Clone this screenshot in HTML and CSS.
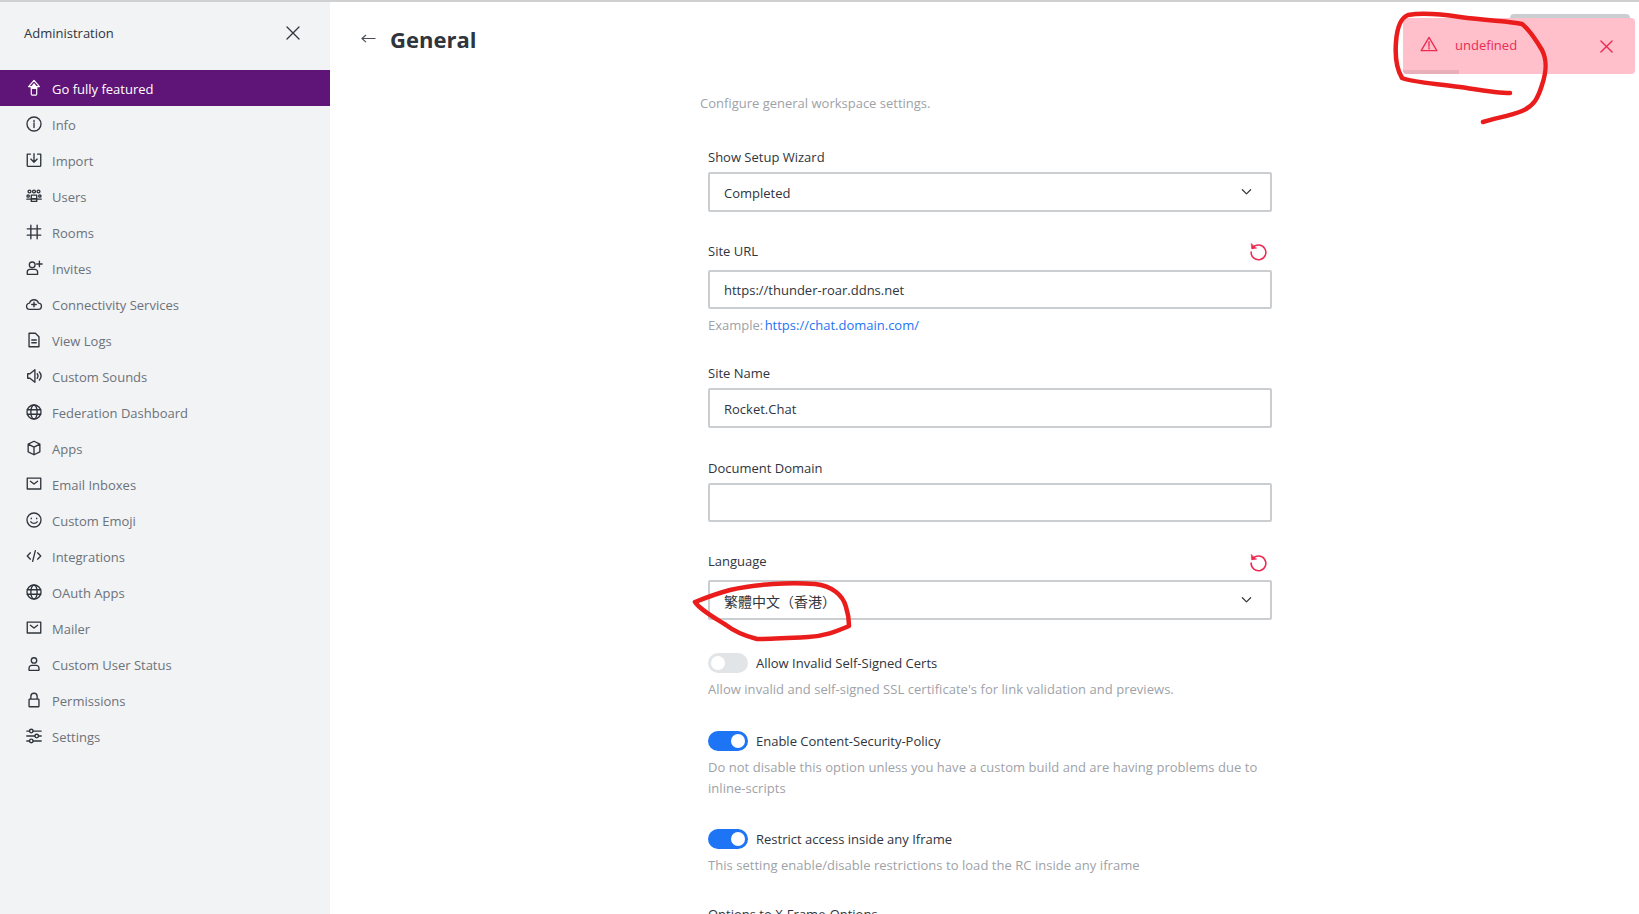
FILE: index.html

```html
<!DOCTYPE html>
<html lang="en">
<head>
  <meta charset="UTF-8">
  <title>General - Administration</title>
  <link rel="stylesheet" href="styles.css">
</head>
<body>
  <aside class="sidebar">
    <div class="sidebar-head">
      <span>Administration</span>
      <svg class="close" viewBox="0 0 14 14"><path d="M1 1l12 12M13 1L1 13"/></svg>
    </div>
    <nav class="nav">
      <a class="nav-item upgrade"><svg viewBox="0 0 20 20"><path d="M10 1.500L16 8.500h-3v8.500a1 1 0 0 1-1 1H8a1 1 0 0 1-1-1V8.500H4z"/><path class="solid" d="M10 4.500L13.500 9v2h-7V9z"/></svg>Go fully featured</a>
      <a class="nav-item"><svg viewBox="0 0 20 20"><circle cx="10" cy="10" r="7.800"/><path d="M10 9v5M10 6v1.500"/></svg>Info</a>
      <a class="nav-item"><svg viewBox="0 0 20 20"><path d="M6 3.500H2.500V16a1 1 0 0 0 1 1h13a1 1 0 0 0 1-1V3.500H14"/><path d="M10 3v9M6.500 9l3.500 3.500L13.500 9"/></svg>Import</a>
      <a class="nav-item"><svg viewBox="0 0 20 20"><circle cx="5" cy="5" r="1.600"/><circle cx="10" cy="5" r="1.600"/><circle cx="15" cy="5" r="1.600"/><circle cx="3.500" cy="10" r="1.300"/><circle cx="16.500" cy="10" r="1.300"/><path d="M7 9h6v4H7zM7 13.500h6V16H7zM2 13.500h4M14 13.500h4"/></svg>Users</a>
      <a class="nav-item"><svg viewBox="0 0 20 20"><path d="M6.500 2.500v15M13.500 2.500v15M2.500 6.500h15M2.500 13.500h15"/></svg>Rooms</a>
      <a class="nav-item"><svg viewBox="0 0 20 20"><circle cx="8" cy="6.500" r="3.200"/><path d="M5 11.500h6a3 3 0 0 1 3 3V17H2.500v-2.500a3 3 0 0 1 2.500-3zM16 2.500v6M13 5.500h6"/></svg>Invites</a>
      <a class="nav-item"><svg viewBox="0 0 20 20"><path d="M5.500 16a3.500 3.500 0 0 1-.5-7 5.200 5.200 0 0 1 10 0 3.500 3.500 0 0 1-.5 7zM10 8v5M7.500 10.500h5"/></svg>Connectivity Services</a>
      <a class="nav-item"><svg viewBox="0 0 20 20"><path d="M4.500 2.500h7l4 4v11h-11zM7.500 10h5M7.500 13h5"/></svg>View Logs</a>
      <a class="nav-item"><svg viewBox="0 0 20 20"><path d="M3 7.500h2.500L11 3v14l-5.500-4.500H3zM13.500 7.500a4 4 0 0 1 0 5M16 5.500a7 7 0 0 1 0 9"/></svg>Custom Sounds</a>
      <a class="nav-item"><svg viewBox="0 0 20 20"><circle cx="10" cy="10" r="7.800"/><ellipse cx="10" cy="10" rx="3.500" ry="7.800"/><path d="M2.500 7.500h15M2.500 12.500h15"/></svg>Federation Dashboard</a>
      <a class="nav-item"><svg viewBox="0 0 20 20"><path d="M10 2.500l6.500 3.200v8.600L10 17.500l-6.500-3.200V5.700zM3.500 5.700L10 9l6.500-3.300M10 9v8.500"/></svg>Apps</a>
      <a class="nav-item"><svg viewBox="0 0 20 20"><path d="M2.500 3.500h15v12h-15zM6 7l4 3 4-3"/></svg>Email Inboxes</a>
      <a class="nav-item"><svg viewBox="0 0 20 20"><circle cx="10" cy="10" r="7.800"/><path d="M7 8v.5M13 8v.5M6.500 12c1.800 2.300 5.200 2.300 7 0"/></svg>Custom Emoji</a>
      <a class="nav-item"><svg viewBox="0 0 20 20"><path d="M6 6.500L2.500 10 6 13.500M14 6.500l3.500 3.500-3.500 3.500M11.500 4l-3 12"/></svg>Integrations</a>
      <a class="nav-item"><svg viewBox="0 0 20 20"><circle cx="10" cy="10" r="7.800"/><ellipse cx="10" cy="10" rx="3.500" ry="7.800"/><path d="M2.500 7.500h15M2.500 12.500h15"/></svg>OAuth Apps</a>
      <a class="nav-item"><svg viewBox="0 0 20 20"><path d="M2.500 3.500h15v12h-15zM6 7l4 3 4-3"/></svg>Mailer</a>
      <a class="nav-item"><svg viewBox="0 0 20 20"><circle cx="10" cy="6" r="3"/><path d="M7.500 11.500h5a3 3 0 0 1 3 3v2.500h-11v-2.500a3 3 0 0 1 3-3z"/></svg>Custom User Status</a>
      <a class="nav-item"><svg viewBox="0 0 20 20"><path d="M6.500 9V6a3.500 3.500 0 0 1 7 0v3M5 9h10a.8.8 0 0 1 .5.8V17a.8.8 0 0 1-.5.5H5a.8.8 0 0 1-.5-.5V9.800A.8.8 0 0 1 5 9z"/></svg>Permissions</a>
      <a class="nav-item"><svg viewBox="0 0 20 20"><circle cx="7" cy="4.500" r="2"/><circle cx="13" cy="10" r="2"/><circle cx="7" cy="15.500" r="2"/><path d="M2 4.500h3M9 4.500h9M2 10h9M15 10h3M2 15.500h3M9 15.500h9"/></svg>Settings</a>
    </nav>
  </aside>

  <main class="main">
    <header class="page-head">
      <svg class="back" viewBox="0 0 16 10"><path d="M5 1L1 4.500h14M1 4.500L5 8"/></svg>
      <h1>General</h1>
    </header>
    <div class="content">
      <p class="intro">Configure general workspace settings.</p>
      <form class="form">
        <div class="field">
          <div class="label-row"><label>Show Setup Wizard</label></div>
          <div class="select"><span>Completed</span><svg viewBox="0 0 12 8"><path d="M1.500 1.500L6 6l4.500-4.500"/></svg></div>
        </div>
        <div class="field">
          <div class="label-row reset-row"><label>Site URL</label><svg class="reset" viewBox="0 0 20 20"><path class="solid" d="M3 2.500l.5 5 4.500-.7z"/><path d="M4.500 6.500A7 7 0 1 1 3 10.500"/></svg></div>
          <input class="input" type="text" value="https://thunder-roar.ddns.net">
          <div class="hint">Example: <a class="link">https://chat.domain.com/</a></div>
        </div>
        <div class="field">
          <div class="label-row"><label>Site Name</label></div>
          <input class="input" type="text" value="Rocket.Chat">
        </div>
        <div class="field">
          <div class="label-row"><label>Document Domain</label></div>
          <input class="input" type="text" value="">
        </div>
        <div class="field field-last">
          <div class="label-row reset-row"><label>Language</label><svg class="reset" viewBox="0 0 20 20"><path class="solid" d="M3 2.500l.5 5 4.500-.7z"/><path d="M4.500 6.500A7 7 0 1 1 3 10.500"/></svg></div>
          <div class="select"><span class="cjk">繁體中文（香港）</span><svg viewBox="0 0 12 8"><path d="M1.500 1.500L6 6l4.500-4.500"/></svg></div>
        </div>
        <div class="field field-wide">
          <div class="switch-row"><span class="toggle"></span><label>Allow Invalid Self-Signed Certs</label></div>
          <p class="desc">Allow invalid and self-signed SSL certificate's for link validation and previews.</p>
        </div>
        <div class="field">
          <div class="switch-row"><span class="toggle on"></span><label>Enable Content-Security-Policy</label></div>
          <p class="desc">Do not disable this option unless you have a custom build and are having problems due to inline-scripts</p>
        </div>
        <div class="field field-tight">
          <div class="switch-row"><span class="toggle on"></span><label>Restrict access inside any Iframe</label></div>
          <p class="desc">This setting enable/disable restrictions to load the RC inside any iframe</p>
        </div>
        <div class="field">
          <div class="label-row"><label>Options to X-Frame-Options</label></div>
        </div>
      </form>
    </div>
  </main>

  <div class="toast-back"></div>
  <div class="toast">
    <svg class="toast-icon" viewBox="0 0 20 18"><path d="M10 1.500L18.800 16.500H1.200zM10 6.500v5M10 13v1.500"/></svg>
    <span class="toast-text">undefined</span>
    <svg class="toast-close" viewBox="0 0 14 14"><path d="M1 1l12 12M13 1L1 13"/></svg>
    <div class="toast-progress"></div>
  </div>

  <svg class="scribble" viewBox="0 0 1639 914">
    <path d="M1483 122C1495 118 1510 116 1522 111C1534 106 1538 98 1542 85C1547 70 1547 60 1542 50C1536 40 1530 30 1522 24C1510 21 1490 21 1460 17C1440 14 1420 13 1408 15C1400 18 1397 28 1396 42C1395 55 1396 68 1402 78C1412 82 1430 83 1460 87C1480 90 1497 93 1510 93"/>
    <path d="M695 602C705 598 715 594 730 590C755 584 790 582 815 584C832 586 843 595 846 607C849 616 849 622 849 626C835 632 825 636 808 637C790 638 770 639 757 639C745 636 735 632 726 625C715 618 700 610 695 602Z"/>
  </svg>
</body>
</html>
```

FILE: styles.css

```css
* { box-sizing: border-box; }
html, body { height: 100%; }
body { margin: 0; display: flex; height: 914px; overflow: hidden; border-top: 2px solid #d0d0d0; background: #fff; color: #2f343d; font-family: "Open Sans", "Noto Sans CJK TC", sans-serif; font-size: 13px; }
svg { fill: none; stroke-linecap: round; stroke-linejoin: round; }

.sidebar { width: 330px; flex: none; background: #f2f3f5; }
.sidebar-head { height: 68px; padding: 0 30px 6px 24px; display: flex; align-items: center; justify-content: space-between; font-size: 13px; }
.close { width: 14px; height: 14px; stroke: #2f343d; stroke-width: 1.300; }

.nav-item { height: 36px; display: flex; align-items: center; gap: 9px; padding: 2px 0 0 25px; color: #6c727a; }
.nav-item svg { width: 18px; height: 18px; flex: none; margin-top: -2px; stroke: #2f343d; stroke-width: 1.500; }
.upgrade { background: #5f1477; color: #fff; }
.upgrade svg { stroke: #fff; stroke-width: 1.300; }
.upgrade .solid { fill: #fff; stroke: none; }

.main { flex: 1; min-width: 0; }
.page-head { height: 72px; padding: 0 0 0 31px; display: flex; align-items: center; gap: 14px; }
.back { width: 15px; height: 10px; margin-top: 2px; stroke: #4a4f57; stroke-width: 1.200; }
.page-head h1 { margin: 0 0 -2px; font-size: 22px; font-weight: 700; }

.content { padding-left: 370px; }
.intro { margin: 20px 0 0; line-height: 18px; color: #9ea2a8; }
.form { width: 564px; margin: 35px 0 0 8px; }
.field { margin-bottom: 30px; }
.field-last { margin-bottom: 33.500px; }
.field-wide { margin-bottom: 31px; }
.field-tight { margin-bottom: 28px; }
.label-row { height: 20px; margin-bottom: 5px; display: flex; align-items: center; justify-content: space-between; }
.reset-row { margin-bottom: 8px; }
.reset-row label { margin-top: -2px; }
.reset { width: 21px; height: 21px; margin-right: 3px; stroke: #ec2a52; stroke-width: 1.500; }
.reset .solid { fill: #ec2a52; stroke-width: .5; }
.input, .select { width: 100%; height: 39.500px; border: 2px solid #cbced1; border-radius: 2px; padding: 2px 14px 0; background: #fff; color: #2f343d; font: inherit; outline: none; }
.select { display: flex; align-items: center; justify-content: space-between; }
.select svg { width: 11px; height: 8px; margin: -2px 4px 0 0; stroke: #2f343d; stroke-width: 1.300; }
.cjk { font-size: 14px; }
.hint { margin-top: 8px; line-height: 16px; color: #9ea2a8; }
.link { margin-left: -2px; color: #1d74f5; }

.switch-row { display: flex; align-items: center; gap: 8px; height: 20px; }
.toggle { width: 40px; height: 20px; border-radius: 10px; background: #e1e5e8; position: relative; flex: none; }
.toggle::after { content: ""; position: absolute; top: 3px; left: 3px; width: 14px; height: 14px; border-radius: 50%; background: #fff; }
.toggle.on { background: #1d74f5; }
.toggle.on::after { left: 23px; }
.desc { margin: 6px 0 0; line-height: 21px; letter-spacing: .04px; color: #9ea2a8; }

.toast-back { position: absolute; top: 14px; left: 1510px; width: 120px; height: 10px; border-radius: 4px 4px 0 0; background: #cbced1; }
.toast { position: absolute; top: 18px; left: 1403px; width: 232px; height: 56px; border-radius: 0 4px 4px 4px; background: #ffc0cb; overflow: hidden; color: #ec2a52; }
.toast-icon { position: absolute; left: 17px; top: 18px; width: 18px; height: 16px; stroke: #ec2a52; stroke-width: 1.500; }
.toast-text { position: absolute; left: 52px; top: 18px; line-height: 18px; }
.toast-close { position: absolute; right: 22px; top: 22px; width: 13px; height: 13px; stroke: #ec2a52; stroke-width: 1.500; }
.toast-progress { position: absolute; left: 0; bottom: 0; width: 56px; height: 4px; background: #e8aeb9; }

.scribble { position: absolute; left: 0; top: 0; width: 1639px; height: 914px; stroke: #ea1c1c; stroke-width: 4.500; }
```
